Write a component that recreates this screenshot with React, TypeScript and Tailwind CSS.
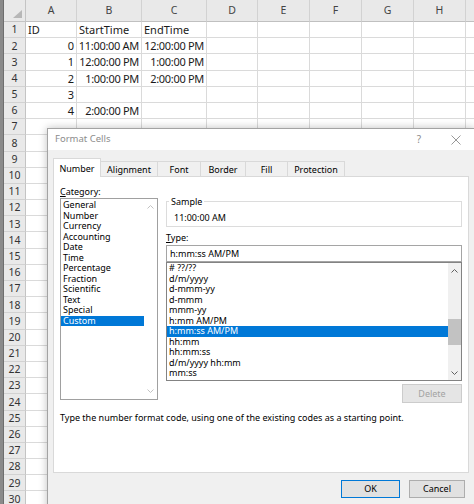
import React from 'react';

type Cell = { t: string; r?: boolean; time?: boolean };

const COLS: { k: string; label: string; w: string }[] = [
  { k: 'A', label: 'A', w: 'w-[51px]' },
  { k: 'B', label: 'B', w: 'w-[65px]' },
  { k: 'C', label: 'C', w: 'w-[65px]' },
  { k: 'D', label: 'D', w: 'w-[51px]' },
  { k: 'E', label: 'E', w: 'w-[52px]' },
  { k: 'F', label: 'F', w: 'w-[52px]' },
  { k: 'G', label: 'G', w: 'w-[52px]' },
  { k: 'H', label: 'H', w: 'w-[52px]' },
  { k: 'I', label: '', w: 'w-[52px]' },
];

const DATA: Record<number, Record<string, Cell>> = {
  1: { A: { t: 'ID' }, B: { t: 'StartTime' }, C: { t: 'EndTime' } },
  2: {
    A: { t: '0', r: true },
    B: { t: '11:00:00 AM', r: true, time: true },
    C: { t: '12:00:00 PM', r: true, time: true },
  },
  3: {
    A: { t: '1', r: true },
    B: { t: '12:00:00 PM', r: true, time: true },
    C: { t: '1:00:00 PM', r: true, time: true },
  },
  4: {
    A: { t: '2', r: true },
    B: { t: '1:00:00 PM', r: true, time: true },
    C: { t: '2:00:00 PM', r: true, time: true },
  },
  5: { A: { t: '3', r: true } },
  6: { A: { t: '4', r: true }, B: { t: '2:00:00 PM', r: true, time: true } },
};

const ROWS = Array.from({ length: 30 }, (_, i) => i + 1);

const CATEGORIES = [
  'General',
  'Number',
  'Currency',
  'Accounting',
  'Date',
  'Time',
  'Percentage',
  'Fraction',
  'Scientific',
  'Text',
  'Special',
  'Custom',
];

const TYPES = [
  '# ??/??',
  'd/m/yyyy',
  'd-mmm-yy',
  'd-mmm',
  'mmm-yy',
  'h:mm AM/PM',
  'h:mm:ss AM/PM',
  'hh:mm',
  'hh:mm:ss',
  'd/m/yyyy hh:mm',
  'mm:ss',
];

const TABS: { label: string; w: string; sel?: boolean }[] = [
  { label: 'Number', w: 'w-[48px]', sel: true },
  { label: 'Alignment', w: 'w-[57px]' },
  { label: 'Font', w: 'w-[43px]' },
  { label: 'Border', w: 'w-[45px]' },
  { label: 'Fill', w: 'w-[42px]' },
  { label: 'Protection', w: 'w-[57px]' },
];

function Chevron({ up, color }: { up?: boolean; color: string }) {
  return (
    <svg width="7" height="4" viewBox="0 0 7 4" fill="none">
      <polyline
        points={up ? '0.5,3.5 3.5,0.5 6.5,3.5' : '0.5,0.5 3.5,3.5 6.5,0.5'}
        stroke={color}
        strokeWidth="1"
      />
    </svg>
  );
}

function Sheet() {
  return (
    <div className="flex">
      <div className="w-[4px] shrink-0 bg-[#8a8a8a] border-r border-[#6e6e6e]" />
      <div className="flex flex-col">
        <div className="flex h-[22px]">
          <div className="w-[22px] shrink-0 bg-[#e9e9e9] border-r border-b border-[#c4c4c4] flex items-end justify-end pr-[3px] pb-[3px]">
            <svg width="9" height="8" viewBox="0 0 9 8">
              <polygon points="9,0 9,8 0,8" fill="#b7b7b7" />
            </svg>
          </div>
          {COLS.map((c) => (
            <div
              key={c.k}
              className={`${c.w} shrink-0 bg-[#e9e9e9] border-r border-b border-r-[#d2d2d2] border-b-[#c0c0c0] flex items-center justify-center text-[10.5px] text-[#444]`}
            >
              {c.label}
            </div>
          ))}
        </div>
        {ROWS.map((r) => (
          <div key={r} className="flex h-[16.2px]">
            <div className="w-[22px] shrink-0 bg-[#e9e9e9] border-r border-b border-r-[#c4c4c4] border-b-[#d2d2d2] flex items-center justify-center text-[10.5px] text-[#333] leading-none">
              {r}
            </div>
            {COLS.map((c) => {
              const cell = DATA[r]?.[c.k];
              return (
                <div
                  key={c.k}
                  className={`${c.w} shrink-0 border-r border-b border-[#dadada] flex items-center px-[2px] text-[11px] text-[#1a1a1a] leading-none whitespace-nowrap ${
                    cell?.r ? 'justify-end' : 'justify-start'
                  } ${cell?.time ? 'tracking-[-0.3px]' : ''}`}
                >
                  {cell?.t ?? ''}
                </div>
              );
            })}
          </div>
        ))}
      </div>
    </div>
  );
}

function Dialog() {
  return (
    <div className="absolute left-[47px] top-[128px] w-[428px] h-[390px] border border-[#a3a3a3] bg-[#f0f0f0] shadow-[0_0_8px_rgba(0,0,0,0.25)] flex flex-col text-[9px] text-black">
      {/* title bar */}
      <div className="h-[21px] shrink-0 bg-white flex items-center pl-[7px]">
        <span className="text-[9.5px] text-[#8c8c8c]">Format Cells</span>
        <div className="ml-auto flex items-center pr-[8px]">
          <span className="w-[20px] text-center text-[10px] text-[#8c8c8c]">?</span>
          <div className="w-[17px]" />
          <div className="w-[20px] flex justify-center">
            <svg width="10" height="10" viewBox="0 0 10 10">
              <line x1="0.5" y1="0.5" x2="9.5" y2="9.5" stroke="#8c8c8c" strokeWidth="0.9" />
              <line x1="9.5" y1="0.5" x2="0.5" y2="9.5" stroke="#8c8c8c" strokeWidth="0.9" />
            </svg>
          </div>
        </div>
      </div>

      {/* body */}
      <div className="flex flex-col pt-[8px] pl-[5px]">
        {/* tabs */}
        <div className="flex items-end h-[18px]">
          {TABS.map((t) =>
            t.sel ? (
              <div
                key={t.label}
                className={`${t.w} h-[19px] mb-[-1px] relative z-10 bg-white border-l border-t border-r border-[#d9d9d9] flex items-center justify-center pt-[1px]`}
              >
                {t.label}
              </div>
            ) : (
              <div
                key={t.label}
                className={`${t.w} h-[15px] bg-[#f0f0f0] border-t border-r border-[#d9d9d9] flex items-center justify-center pt-[1px]`}
              >
                {t.label}
              </div>
            )
          )}
        </div>

        {/* panel */}
        <div className="w-[416px] h-[297px] border border-[#d9d9d9] bg-white px-[6px] pt-[9px] flex flex-col">
          <div className="flex gap-[8px]">
            {/* left column */}
            <div className="w-[98px] flex flex-col">
              <div className="h-[11px] leading-[11px]">
                <span className="underline">C</span>ategory:
              </div>
              <div className="mt-[1px] h-[202px] border border-[#a0a0a0] flex">
                <div className="w-[83px] pt-[1px] flex flex-col">
                  {CATEGORIES.map((c) => (
                    <div
                      key={c}
                      className={`h-[10.5px] leading-[10.5px] pl-[2px] whitespace-nowrap ${
                        c === 'Custom' ? 'bg-[#0078d7] text-white' : ''
                      }`}
                    >
                      {c}
                    </div>
                  ))}
                </div>
                <div className="w-[13px] flex flex-col justify-between items-center py-[6px]">
                  <Chevron up color="#c2c2c2" />
                  <Chevron color="#c2c2c2" />
                </div>
              </div>
            </div>

            {/* right column */}
            <div className="w-[296px] flex flex-col mt-[10px]">
              <fieldset className="border border-[#dcdcdc] p-0 m-0">
                <legend className="ml-[2px] px-[2px] leading-[11px]">Sample</legend>
                <div className="pl-[7px] pt-[5px] pb-[3px] leading-[11px]">11:00:00 AM</div>
              </fieldset>
              <div className="mt-[5px] h-[11px] leading-[11px]">
                <span className="underline">T</span>ype:
              </div>
              <div className="mt-[2px] h-[17px] border border-[#a5a5a5] flex items-center pl-[3px]">
                h:mm:ss AM/PM
              </div>
              <div className="h-[119px] border border-[#838383] flex">
                <div className="w-[281px] flex flex-col">
                  {TYPES.map((t) => (
                    <div
                      key={t}
                      className={`h-[10.5px] leading-[10.5px] pl-[2px] whitespace-nowrap ${
                        t === 'h:mm:ss AM/PM' ? 'bg-[#0078d7] text-white' : ''
                      }`}
                    >
                      {t}
                    </div>
                  ))}
                </div>
                <div className="w-[13px] bg-[#f0f0f0] flex flex-col">
                  <div className="h-[15px] flex items-center justify-center">
                    <Chevron up color="#606060" />
                  </div>
                  <div className="flex-1 flex flex-col">
                    <div className="mt-[41px] h-[26px] bg-[#c2c2c2]" />
                  </div>
                  <div className="h-[15px] flex items-center justify-center">
                    <Chevron color="#606060" />
                  </div>
                </div>
              </div>
              <div className="mt-[3px] self-end w-[60px] h-[19px] border border-[#cccccc] bg-[#e5e5e5] text-[#a3a3a3] flex items-center justify-center">
                Delete
              </div>
            </div>
          </div>
          <div className="mt-[9px] leading-[11px] whitespace-nowrap">
            Type the number format code, using one of the existing codes as a starting point.
          </div>
        </div>

        {/* buttons */}
        <div className="mt-[7px] flex justify-end gap-[9px] pr-[9px]">
          <div className="w-[59px] h-[18px] border border-[#0078d7] bg-[#e1e1e1] flex items-center justify-center">
            OK
          </div>
          <div className="w-[56px] h-[18px] border border-[#adadad] bg-[#e1e1e1] flex items-center justify-center">
            Cancel
          </div>
        </div>
      </div>
    </div>
  );
}

export default function App() {
  return (
    <div className="relative w-[474px] h-[504px] overflow-hidden bg-white font-['Noto_Sans',sans-serif]">
      <Sheet />
      <Dialog />
    </div>
  );
}
